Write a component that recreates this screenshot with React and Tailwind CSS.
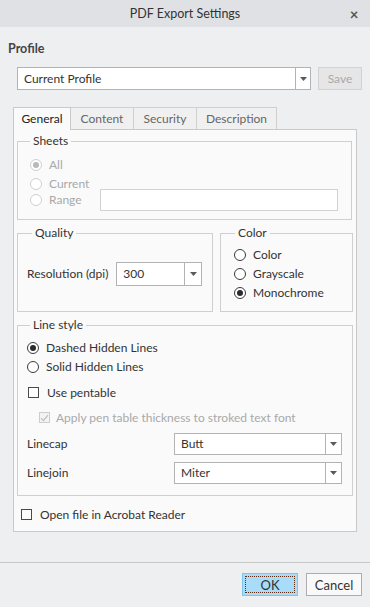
import React from 'react';

const font = { fontFamily: 'Lato, "Open Sans", sans-serif' };

function Arrow() {
  return (
    <svg width="7" height="4" viewBox="0 0 7 4" className="block">
      <path d="M0 0H7L3.5 4Z" fill="#5a5a5a" />
    </svg>
  );
}

function Select({ value, className = '', arrowW = 'w-[16px]' }) {
  return (
    <div className={`flex bg-white border border-[#b3b3b3] ${className}`}>
      <div className="flex-1 flex items-center pl-[6px] text-[#333]">{value}</div>
      <div className={`${arrowW} border-l border-[#b3b3b3] flex items-center justify-center`}>
        <Arrow />
      </div>
    </div>
  );
}

function Radio({ checked, disabled, label, className = '' }) {
  const ring = disabled ? 'border-[#cfcfcf]' : 'border-[#3a3a3a]';
  const dot = disabled ? 'bg-[#b9b9b9]' : 'bg-[#2b2b2b]';
  return (
    <div className={`flex items-center h-[19px] ${className}`}>
      <span className={`w-[12px] h-[12px] rounded-full border bg-white ${ring} flex items-center justify-center`}>
        {checked && <span className={`w-[6px] h-[6px] rounded-full ${dot}`} />}
      </span>
      <span className={`ml-[7px] ${disabled ? 'text-[#a9a9a9]' : 'text-[#333]'}`}>{label}</span>
    </div>
  );
}

function Check({ checked, disabled, label, className = '', gap = 'ml-[8px]' }) {
  return (
    <div className={`flex items-center h-[19px] ${className}`}>
      <span
        className={`w-[11px] h-[11px] border flex items-center justify-center ${
          disabled ? 'border-[#cdcdcd] bg-[#f3f3f3]' : 'border-[#4a4a4a] bg-white'
        }`}
      >
        {checked && (
          <svg width="9" height="8" viewBox="0 0 9 8">
            <path d="M1 4.2L3.4 6.6L8 1.2" fill="none" stroke={disabled ? '#bdbdbd' : '#333'} strokeWidth="1.2" />
          </svg>
        )}
      </span>
      <span className={`${gap} ${disabled ? 'text-[#a9a9a9]' : 'text-[#333]'}`}>{label}</span>
    </div>
  );
}

function Group({ title, className = '', legend = 'ml-0', children }) {
  return (
    <fieldset className={`border border-[#cfcfcf] ${className}`}>
      <legend className={`${legend} px-[3px] leading-[16px] text-[#333]`}>{title}</legend>
      {children}
    </fieldset>
  );
}

function Tab({ label, active, w }) {
  return active ? (
    <div className={`${w} h-[23px] -mb-px z-10 bg-[#fafafa] border border-b-0 border-[#c9c9c9] flex items-center justify-center text-[#222]`}>
      {label}
    </div>
  ) : (
    <div className={`${w} h-[22px] bg-[#f0f0f0] border border-l-0 border-b-0 border-[#cfcfcf] flex items-center justify-center text-[#666]`}>
      {label}
    </div>
  );
}

export default function App() {
  return (
    <div className="w-[370px] h-[607px] bg-[#eeeff1] flex flex-col text-[12px] leading-[16px]" style={font}>
      {/* title bar */}
      <div className="h-[27px] bg-[#dfe1e4] flex items-center">
        <div className="flex-1 text-center text-[12.5px] text-[#333] pl-[26px]">PDF Export Settings</div>
        <div className="w-[20px] mr-[6px] text-center text-[15px] font-bold text-[#555]">×</div>
      </div>

      <div className="px-[8px]">
        <div className="mt-[14px] font-bold text-[12.5px] text-[#444]">Profile</div>
        <div className="mt-[10px] ml-[9px] flex gap-[7px]">
          <Select value="Current Profile" className="w-[294px] h-[23px]" arrowW="w-[15px]" />
          <div className="w-[44px] h-[23px] bg-[#e6e6e6] border border-[#d2d2d2] flex items-center justify-center text-[#a9a9a9]">
            Save
          </div>
        </div>

        {/* tabs */}
        <div className="mt-[17px] ml-[5px] w-[344px]">
          <div className="flex">
            <Tab label="General" active w="w-[58px]" />
            <Tab label="Content" w="w-[63px]" />
            <Tab label="Security" w="w-[63px]" />
            <Tab label="Description" w="w-[80px]" />
          </div>
          <div className="relative bg-[#fafafa] border border-[#c9c9c9] px-[3px] pt-[3px] pb-[7px]">
            <Group title="Sheets" className="pl-[12px] pr-[13px] pb-[8px] w-[335px]">
              <div className="pt-[6px]">
                <Radio checked disabled label="All" />
                <div className="h-[17px]">
                  <Radio disabled label="Current" className="h-[17px]" />
                </div>
                <div className="flex items-center h-[22px] mt-[-2px]">
                  <Radio disabled label="Range" className="w-[70px]" />
                  <div className="flex-1 h-[22px] bg-white border border-[#d2d2d2]" />
                </div>
              </div>
            </Group>

            <div className="mt-[5px] flex gap-[7px] w-[336px]">
              <Group title="Quality" legend="ml-[5px]" className="w-[196px] pl-[9px] pb-[9px]">
                <div className="mt-[21px] flex items-center">
                  <span className="text-[#333]">Resolution (dpi)</span>
                  <Select value="300" className="ml-[8px] w-[86px] h-[24px]" arrowW="w-[17px]" />
                </div>
              </Group>
              <Group title="Color" legend="ml-[1px]" className="flex-1 pl-[13px] pb-[9px]">
                <div className="pt-[4px]">
                  <Radio label="Color" />
                  <Radio label="Grayscale" />
                  <Radio checked label="Monochrome" />
                </div>
              </Group>
            </div>

            <Group title="Line style" legend="ml-[3px]" className="mt-[5px] w-[336px] pl-[9px] pr-[10px] pb-[11px]">
              <div className="pt-[5px]">
                <Radio checked label="Dashed Hidden Lines" />
                <Radio label="Solid Hidden Lines" />
                <Check label="Use pentable" className="mt-[7px] pl-px" gap="ml-[8px]" />
                <Check checked disabled label="Apply pen table thickness to stroked text font" className="mt-[6px] pl-[12px]" gap="ml-[6px]" />
                <div className="mt-[6px] flex items-center h-[22px]">
                  <span className="w-[147px] text-[#333]">Linecap</span>
                  <Select value="Butt" className="flex-1 h-[22px]" arrowW="w-[16px]" />
                </div>
                <div className="mt-[7px] flex items-center h-[22px]">
                  <span className="w-[147px] text-[#333]">Linejoin</span>
                  <Select value="Miter" className="flex-1 h-[22px]" arrowW="w-[16px]" />
                </div>
              </div>
            </Group>

            <Check label="Open file in Acrobat Reader" className="mt-[9px] pl-[4px]" gap="ml-[8px]" />
          </div>
        </div>
      </div>

      <div className="flex-1" />
      <div className="h-[45px] border-t border-[#c8c8c8] flex justify-end items-start pt-[10px] pr-[8px] gap-[8px]">
        <div className="w-[56px] h-[23px] bg-[#a8dcf8] border border-[#7cc6ee] p-[2px]">
          <div className="w-full h-full border border-dotted border-[#5b2a10] flex items-center justify-center text-[13px] text-[#333]">
            OK
          </div>
        </div>
        <div className="w-[56px] h-[23px] bg-[#f9f9f9] border border-[#adadad] flex items-center justify-center text-[13px] text-[#333]">
          Cancel
        </div>
      </div>
    </div>
  );
}
